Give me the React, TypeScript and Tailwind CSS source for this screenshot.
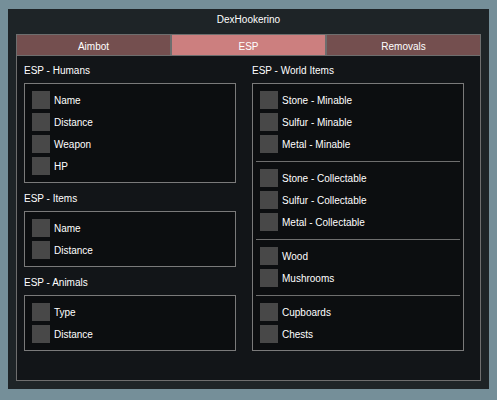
import React, { useState } from 'react';

type Section = string[];

const humans: Section = ['Name', 'Distance', 'Weapon', 'HP'];
const items: Section = ['Name', 'Distance'];
const animals: Section = ['Type', 'Distance'];

// world items are split into groups with a line between them
const worldItems: Section[] = [
  ['Stone - Minable', 'Sulfur - Minable', 'Metal - Minable'],
  ['Stone - Collectable', 'Sulfur - Collectable', 'Metal - Collectable'],
  ['Wood', 'Mushrooms'],
  ['Cupboards', 'Chests'],
];

const tabs = ['Aimbot', 'ESP', 'Removals'];

const CheckRow: React.FC<{ label: string }> = ({ label }) => {
  const [checked, setChecked] = useState<boolean>(false);
  return (
    <div className="flex h-[18px] items-center cursor-pointer" onClick={() => setChecked(!checked)}>
      <div className={`h-[18px] w-[18px] shrink-0 ${checked ? 'bg-[#cc7f7f]' : 'bg-[#484848]'}`} />
      <span className="ml-[4px] pt-px leading-[14px]">{label}</span>
    </div>
  );
};

const Rows: React.FC<{ list: Section }> = ({ list }) => (
  <div className="flex flex-col gap-[4px]">
    {list.map((label) => (
      <CheckRow key={label} label={label} />
    ))}
  </div>
);

const GroupBox: React.FC<{ children: React.ReactNode }> = ({ children }) => (
  <div className="w-[212px] border border-[#7a7a7a] bg-[#0c0e10] px-[7px] py-[7px]">{children}</div>
);

const App: React.FC = () => {
  const [activeTab, setActiveTab] = useState<number>(1);

  return (
    <div
      className="h-[400px] w-[497px] bg-[#758f99] pl-[8px] pt-[9px] text-[10px] text-white"
      style={{ fontFamily: '"Liberation Sans", Arial, sans-serif' }}
    >
      <div className="flex h-[380px] w-[481px] flex-col bg-[#1e2427] px-[8px] pb-[8px]">
        {/* Window title */}
        <div className="flex h-[25px] items-center justify-center pb-[4px] leading-[14px]">DexHookerino</div>

        {/* Tabbed frame */}
        <div className="flex flex-1 flex-col border border-[#6e6e6e] bg-[#121518]">
          <div className="flex h-[21px] border-b border-[#6e6e6e]">
            {tabs.map((tab, i) => (
              <div
                key={tab}
                onClick={() => setActiveTab(i)}
                className={`flex items-center justify-center pt-[3px] cursor-pointer leading-[14px] ${
                  i === 0 ? 'w-[154px] border-r border-[#6e6e6e]' : i === 1 ? 'w-[155px] border-x border-[#6e6e6e]' : 'flex-1 border-l border-[#6e6e6e]'
                } ${activeTab === i ? 'bg-[#cc7f7f]' : 'bg-[#744f4f]'}`}
              >
                {tab}
              </div>
            ))}
          </div>

          <div className="flex gap-[16px] pl-[7px] pt-[8px]">
            {/* Left column */}
            <div className="flex flex-col">
              <div className="mb-[6px] h-[13px] leading-[13px]">ESP - Humans</div>
              <GroupBox>
                <Rows list={humans} />
              </GroupBox>
              <div className="mb-[6px] mt-[9px] h-[13px] leading-[13px]">ESP - Items</div>
              <GroupBox>
                <Rows list={items} />
              </GroupBox>
              <div className="mb-[6px] mt-[9px] h-[13px] leading-[13px]">ESP - Animals</div>
              <GroupBox>
                <Rows list={animals} />
              </GroupBox>
            </div>

            {/* Right column */}
            <div className="flex flex-col">
              <div className="mb-[6px] h-[13px] leading-[13px]">ESP - World Items</div>
              <GroupBox>
                {worldItems.map((group, i) => (
                  <div key={i}>
                    {i > 0 && <div className="-mx-[4px] mb-[7px] mt-[8px] h-px bg-[#6e6e6e]" />}
                    <Rows list={group} />
                  </div>
                ))}
              </GroupBox>
            </div>
          </div>
        </div>
      </div>
    </div>
  );
};

export default App;
